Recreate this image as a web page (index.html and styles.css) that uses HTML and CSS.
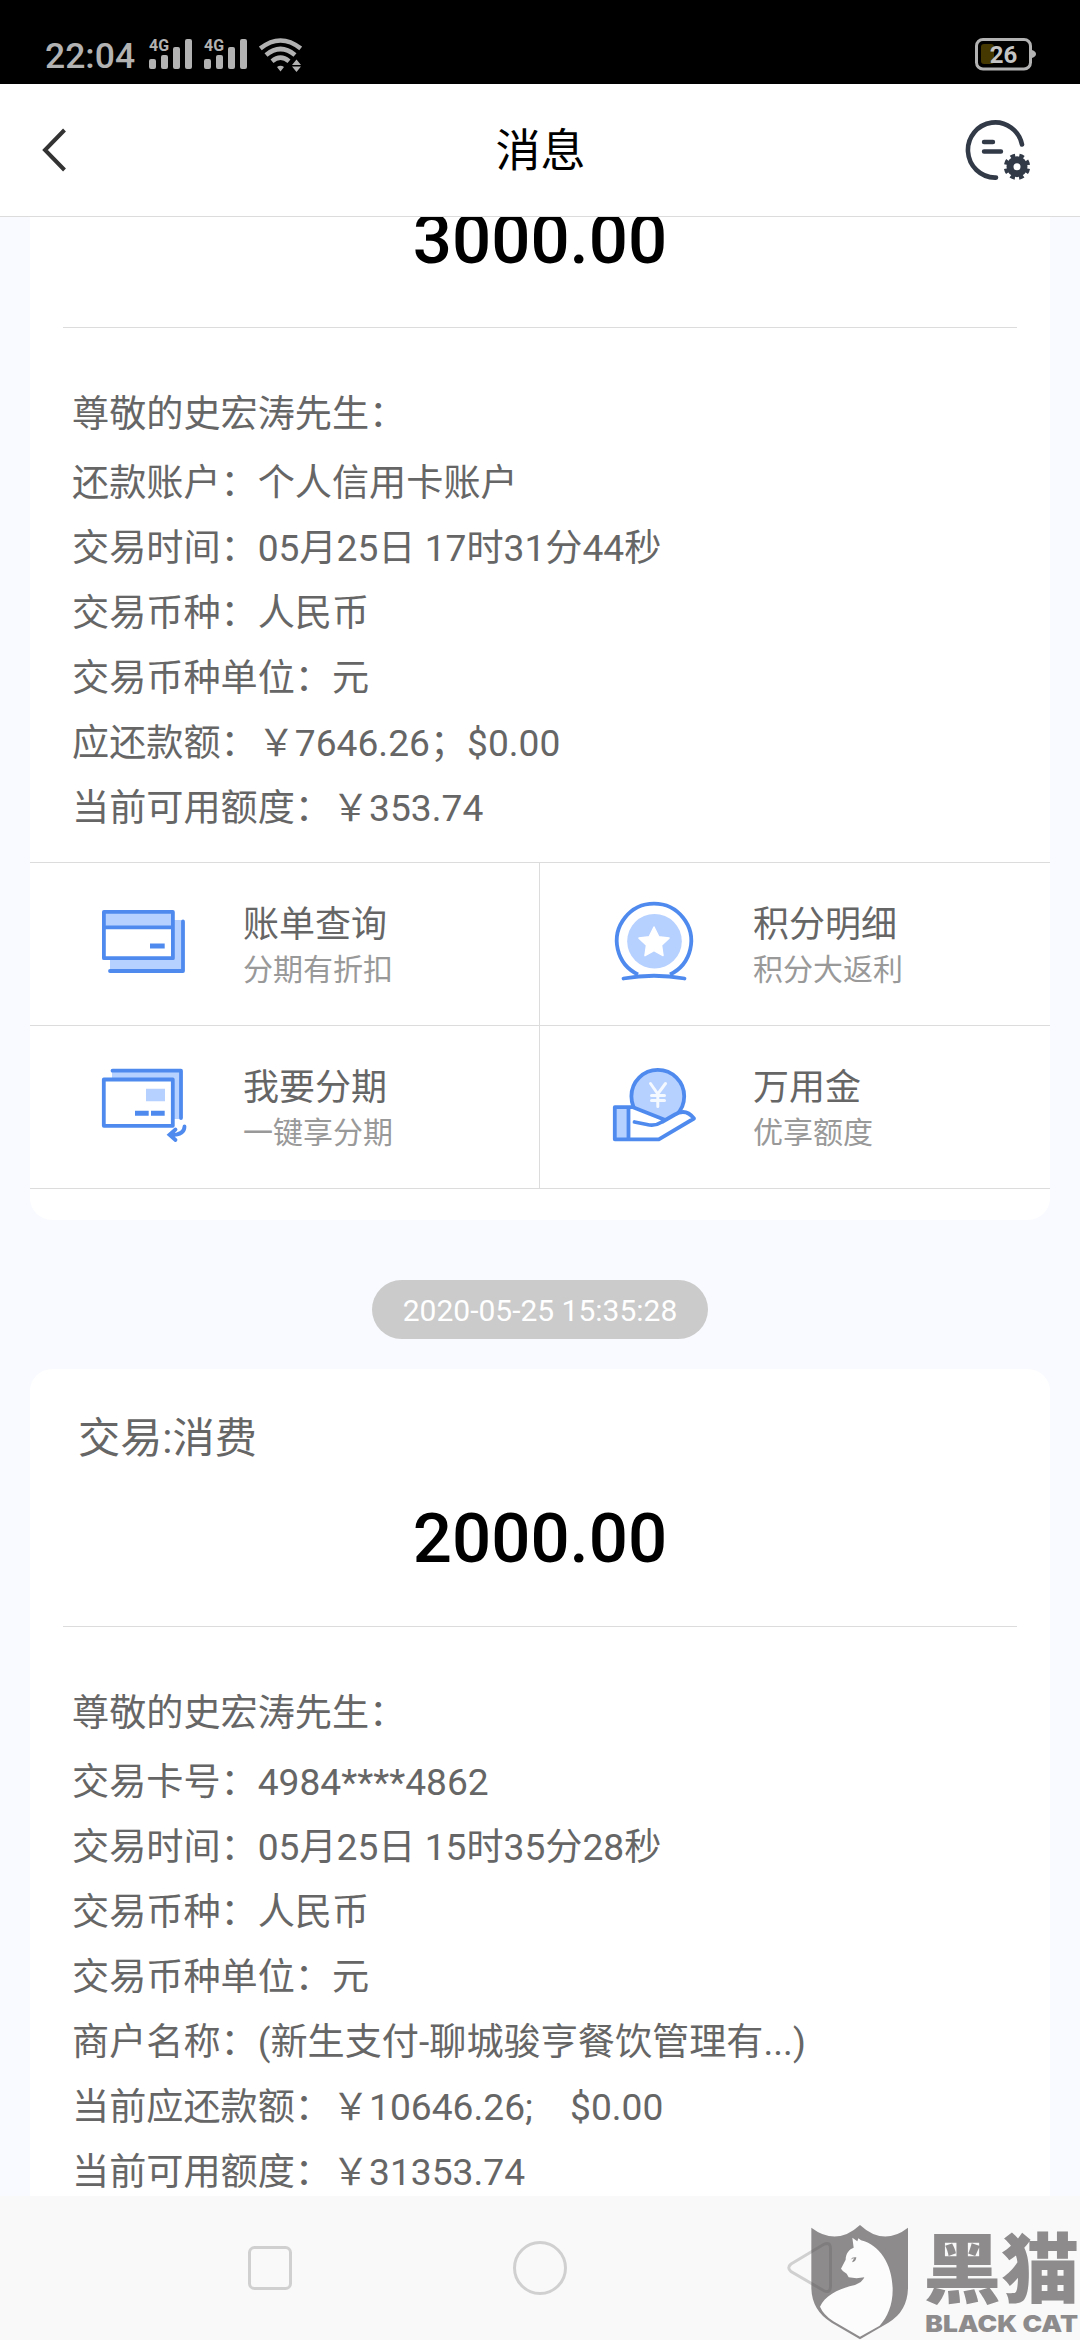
FILE: index.html
```html
<!DOCTYPE html>
<html lang="zh-CN">
<head>
<meta charset="utf-8">
<title>消息</title>
<link rel="stylesheet" href="styles.css">
</head>
<body>
<div class="phone">
  <div class="status">
    <span class="clock">22:04</span>
    <svg class="signal" width="44" height="32" viewBox="0 0 44 32">
      <text class="net" x="0" y="13" textLength="20" lengthAdjust="spacingAndGlyphs">4G</text>
      <path d="M2 21h3q2 0 2 2v6q0 2-2 2h-3q-2 0-2-2v-6q0-2 2-2zM14 17h3q2 0 2 2v10q0 2-2 2h-3q-2 0-2-2v-10q0-2 2-2zM26 9h3q2 0 2 2v18q0 2-2 2h-3q-2 0-2-2v-18q0-2 2-2zM38 1h3q2 0 2 2v26q0 2-2 2h-3q-2 0-2-2v-26q0-2 2-2z"/>
    </svg>
    <svg class="signal second" width="44" height="32" viewBox="0 0 44 32">
      <text class="net" x="0" y="13" textLength="20" lengthAdjust="spacingAndGlyphs">4G</text>
      <path d="M2 21h3q2 0 2 2v6q0 2-2 2h-3q-2 0-2-2v-6q0-2 2-2zM14 17h3q2 0 2 2v10q0 2-2 2h-3q-2 0-2-2v-10q0-2 2-2zM26 9h3q2 0 2 2v18q0 2-2 2h-3q-2 0-2-2v-18q0-2 2-2zM38 1h3q2 0 2 2v26q0 2-2 2h-3q-2 0-2-2v-26q0-2 2-2z"/>
    </svg>
    <svg class="wifi" width="43" height="34" viewBox="0 0 43 34">
      <g fill="none" stroke="#b2b2b2" stroke-width="4.6">
        <path d="M1.3 10.5Q21.5-5.5 41.7 10.5"/>
        <path d="M7 17Q21.5 5 36 17"/>
        <path d="M13 23.2Q21.5 16.2 30 23.2"/>
      </g>
      <path fill="#b2b2b2" d="M18 29q3.500-2.500 7 0l-3.500 4.500zM33 27l4.500-5.500 4.500 5.500zM33 28.500h9l-4.500 5.500z"/>
    </svg>
    <svg class="battery" width="61" height="33" viewBox="0 0 61 33">
      <rect x="6" y="6" width="13" height="20" rx="3" fill="#453800"/>
      <rect x="1.500" y="1.500" width="54" height="29.500" rx="6.500" fill="none" stroke="#b2b2b2" stroke-width="3"/>
      <path d="M57 12q4 1.500 4 4t-4 4z" fill="#b2b2b2"/>
      <text class="charge" x="28.500" y="25">26</text>
    </svg>
  </div>

  <div class="header">
    <svg class="back" width="24" height="44" viewBox="0 0 24 44"><path d="M22.500 2L3 22l19.500 20" fill="none" stroke="#333" stroke-width="4"/></svg>
    <h1 class="title">消息</h1>
    <svg class="settings" width="66" height="62" viewBox="0 0 66 62">
      <g fill="none" stroke="#323a48" stroke-linecap="round">
        <path d="M57 25.500A27.300 27.600 0 1 0 30 58.600H31" stroke-width="4.600"/>
        <path d="M19 23H28M19 32.500H36" stroke-width="4.400"/>
      </g>
      <circle cx="52" cy="47.700" r="7" fill="none" stroke="#323a48" stroke-width="7"/>
      <circle cx="52" cy="47.700" r="11.200" fill="none" stroke="#323a48" stroke-width="4" stroke-dasharray="4.600 4.196" stroke-dashoffset="-2"/>
    </svg>
  </div>

  <div class="feed">
    <section class="card continued">
      <div class="amount">3000.00</div>
      <div class="details">
        <p class="greeting">尊敬的史宏涛先生：</p>
        <p>还款账户：个人信用卡账户</p>
        <p>交易时间：05月25日 17时31分44秒</p>
        <p>交易币种：人民币</p>
        <p>交易币种单位：元</p>
        <p>应还款额：￥7646.26；$0.00</p>
        <p>当前可用额度：￥353.74</p>
      </div>
      <div class="links">
        <div class="link">
          <svg class="icon" viewBox="0 0 90 90">
            <path fill="#b6d0ff" d="M12 60V72H85V21H75V60z"/>
            <path class="line" d="M12 72H85V22.500" stroke-linecap="round" stroke-linejoin="round"/>
            <rect x="5.900" y="12.900" width="69" height="46.300" fill="#fff"/>
            <path fill="#b6d0ff" d="M6 13h69v15H6z"/>
            <path class="line" d="M5.900 12.900h69v46.300h-69zM6 28.400h69" stroke-linejoin="round"/>
            <path fill="#4f8bef" d="M52 44.500h14.700v5H52z"/>
          </svg>
          <div class="label"><div class="name">账单查询</div><div class="note">分期有折扣</div></div>
        </div>
        <div class="link">
          <svg class="icon" viewBox="0 0 90 90">
            <path class="line" d="M29 75.500A37.200 37.200 0 1 1 61 75.500"/>
            <circle cx="45.500" cy="42.300" r="27.300" fill="#b6d0ff"/>
            <path fill="#fff" stroke="#fff" stroke-width="1.500" stroke-linejoin="round" d="M45 28l4.700 9.700 10.300 1.400-7.500 7.100 1.500 10.400-9-4.900-9 4.900 1.500-10.400-7.500-7.100 10.300-1.400z"/>
            <path class="line" d="M14.500 79.500Q45 74 75.500 79.500" stroke-linecap="round"/>
          </svg>
          <div class="label"><div class="name">积分明细</div><div class="note">积分大返利</div></div>
        </div>
        <div class="link">
          <svg class="icon" viewBox="0 0 90 90">
            <path fill="#b6d0ff" d="M14 17V9H83V57H75V17z"/>
            <path class="line" d="M14.500 8.700H83V56" stroke-linecap="round" stroke-linejoin="round"/>
            <rect class="line on-white" x="5.800" y="17.500" width="69" height="46.300" stroke-linejoin="round"/>
            <path fill="#b6d0ff" d="M48 26.700h19v12.500H48z"/>
            <path fill="#4f8bef" d="M37 48.700h13.700v5H37zM53 48.700h13.700v5H53z"/>
            <path class="line" d="M86.500 64.500C86.500 70 82 73 73 73M77.500 67.500L71.500 72.800L77.500 78" stroke-linecap="round"/>
          </svg>
          <div class="label"><div class="name">我要分期</div><div class="note">一键享分期</div></div>
        </div>
        <div class="link">
          <svg class="icon" viewBox="0 0 90 90">
            <circle class="line on-blue" cx="48.800" cy="34.200" r="26.400"/>
            <path fill="#fff" d="M19 45.200H24L56 58L65 53Q76 46 85 56.500L49.800 77.300H19z"/>
            <path fill="#b6d0ff" d="M5.800 45.200H19.500V77.300H5.800z"/>
            <path class="line" stroke-linejoin="round" stroke-linecap="round" d="M19.500 45.200H5.800V77.300H49.800L85 56.500Q77 46 66 52.500L53 60Q46 64.500 38 62.500L25.500 60M19.500 45.200V77.300M19.500 45.200H24L55 57.500"/>
            <path fill="none" stroke="#f4f8ff" stroke-width="3" stroke-linecap="round" d="M41.500 21.500L48.800 32L56.500 21.500M48.800 32V44.500M42.500 33.400H55.500M42.500 38.400H55.500"/>
          </svg>
          <div class="label"><div class="name">万用金</div><div class="note">优享额度</div></div>
        </div>
      </div>
    </section>

    <div class="stamp">2020-05-25 15:35:28</div>

    <section class="card">
      <h2 class="kind">交易:消费</h2>
      <div class="amount">2000.00</div>
      <div class="details">
        <p class="greeting">尊敬的史宏涛先生：</p>
        <p>交易卡号：4984****4862</p>
        <p>交易时间：05月25日 15时35分28秒</p>
        <p>交易币种：人民币</p>
        <p>交易币种单位：元</p>
        <p>商户名称：(新生支付-聊城骏亨餐饮管理有...)</p>
        <p>当前应还款额：￥10646.26;&#12288;$0.00</p>
        <p>当前可用额度：￥31353.74</p>
      </div>
    </section>
  </div>

  <div class="nav">
    <svg width="60" height="60" viewBox="0 0 60 60"><rect x="9.500" y="9.500" width="41" height="41" rx="5"/></svg>
    <svg width="60" height="60" viewBox="0 0 60 60"><circle cx="30" cy="30" r="25.500"/></svg>
    <svg width="60" height="60" viewBox="0 0 60 60"><path d="M11 26L43.500 6.500Q50.500 3 50.500 11V48Q50.500 56 43.500 52.500L11 33.500Q6.500 29.800 11 26z"/></svg>
  </div>

  <svg class="watermark" width="300" height="160" viewBox="0 0 900 480">
    <path class="ink" d="M94 143Q170 200 240 135Q310 200 384 143V325Q382 395 325 428L240 478L155 428Q96 393 94 325z"/>
    <path class="cat" d="M217 173L232 184L235 175L243 181C300 195 338 255 338 330C338 375 322 412 299 437L240 470L160 424Q130 404 120 380C135 345 180 325 225 315Q248 306 253 292Q230 297 206 292L200 281Q187 274 183 266L197 239C197 220 208 207 221 203z"/>
    <path class="eye" d="M212 239Q216 230 229 232Q228 246 216 247Q219 240 223 235Q215 236 212 239z"/>
    <text class="brand" x="430" y="350" textLength="468" lengthAdjust="spacingAndGlyphs">黑猫</text>
    <text class="latin" x="436" y="457" textLength="458" lengthAdjust="spacingAndGlyphs">BLACK CAT</text>
  </svg>
</div>
</body>
</html>
```
FILE: styles.css
```css
* { box-sizing: border-box; }
body, h1, h2, p { margin: 0; font-weight: 400; }
body { font-family: Roboto, "Noto Sans CJK SC", sans-serif; background: #f9faff; }
svg { display: block; flex: none; }

.phone {
  position: relative;
  display: flex;
  flex-direction: column;
  width: 1080px;
  height: 2340px;
  overflow: hidden;
}

.status {
  display: flex;
  align-items: flex-start;
  flex: none;
  height: 84px;
  padding: 38px 44px 0 45px;
  background: #000;
  color: #b2b2b2;
}
.clock { width: 104px; margin-top: -3px; font-size: 35.500px; font-weight: 500; line-height: 42px; }
.signal { fill: #b2b2b2; overflow: visible; }
.second { margin-left: 11px; }
.net { font: 700 17px Roboto, sans-serif; }
.wifi { margin-left: 11px; }
.battery { margin-left: auto; }
.charge { font: 700 24px Roboto, sans-serif; fill: #c4c4c4; text-anchor: middle; }

.header {
  display: flex;
  align-items: center;
  justify-content: space-between;
  flex: none;
  height: 133px;
  padding: 0 49px 0 42px;
  background: #fff;
  border-bottom: 1px solid #dcdcdc;
}
.back { margin-right: 42px; }
.title { margin-left: 8px; padding-top: 3px; font-size: 45px; line-height: 64px; color: #000; }

.feed {
  flex: 1;
  min-height: 0;
  padding: 0 30px;
  overflow: hidden;
}
.card {
  padding-bottom: 32px;
  background: #fff;
  border-radius: 22px;
  overflow: hidden;
}
.continued {
  height: 1003px;
  border-radius: 0 0 22px 22px;
}
.continued .amount { margin-top: -19px; }
.kind {
  padding: 40px 48px 0;
  font-size: 42.200px;
  line-height: 60px;
  color: #666;
}
.amount {
  height: 130px;
  margin: 28px 33px 0;
  padding-top: 2px;
  border-bottom: 1px solid #dcdcdc;
  font-size: 69px;
  font-weight: 500;
  line-height: 80px;
  text-align: center;
  color: #000;
}
.details {
  padding: 54px 42px 0;
  font-size: 37.150px;
  line-height: 65px;
  color: #666;
  white-space: nowrap;
}
.greeting { margin-bottom: 4px; }

.links {
  display: grid;
  grid-template-columns: 510px 510px;
  margin-top: 21px;
  border-top: 1px solid #dcdcdc;
}
.link {
  display: flex;
  align-items: center;
  height: 163px;
  padding-left: 68px;
  border-bottom: 1px solid #dcdcdc;
}
.link:nth-child(odd) { border-right: 1px solid #dcdcdc; }
.icon { width: 90px; height: 90px; margin-right: 55px; }
.link:nth-child(even) .icon { margin: 0 54px 0 1px; }
.line { fill: none; stroke: #4f8bef; stroke-width: 3.800px; }
.on-white { fill: #fff; }
.on-blue { fill: #b6d0ff; }
.label { padding-top: 6px; }
.name { font-size: 36px; line-height: 46px; color: #666; }
.note { font-size: 30px; line-height: 44px; color: #999; }

.stamp {
  width: 336px;
  height: 59px;
  margin: 60px auto 30px;
  border-radius: 30px;
  background: #cbcbcb;
  color: #fff;
  font-size: 30px;
  line-height: 61px;
  text-align: center;
}

.nav {
  display: flex;
  align-items: center;
  justify-content: center;
  gap: 210px;
  flex: none;
  height: 144px;
  background: #f9f9f9;
}
.nav svg { fill: none; stroke: #d0d0d0; stroke-width: 3px; }

.watermark { position: absolute; right: 0; bottom: 0; }
.ink, .eye { fill: rgba(87, 82, 84, 0.66); }
.cat { fill: #fcfcfc; }
.brand { font: 900 228px "Noto Sans CJK SC", sans-serif; fill: #8e8b8c; }
.latin { font: 900 68px Inter, sans-serif; fill: #8e8b8c; }
```
